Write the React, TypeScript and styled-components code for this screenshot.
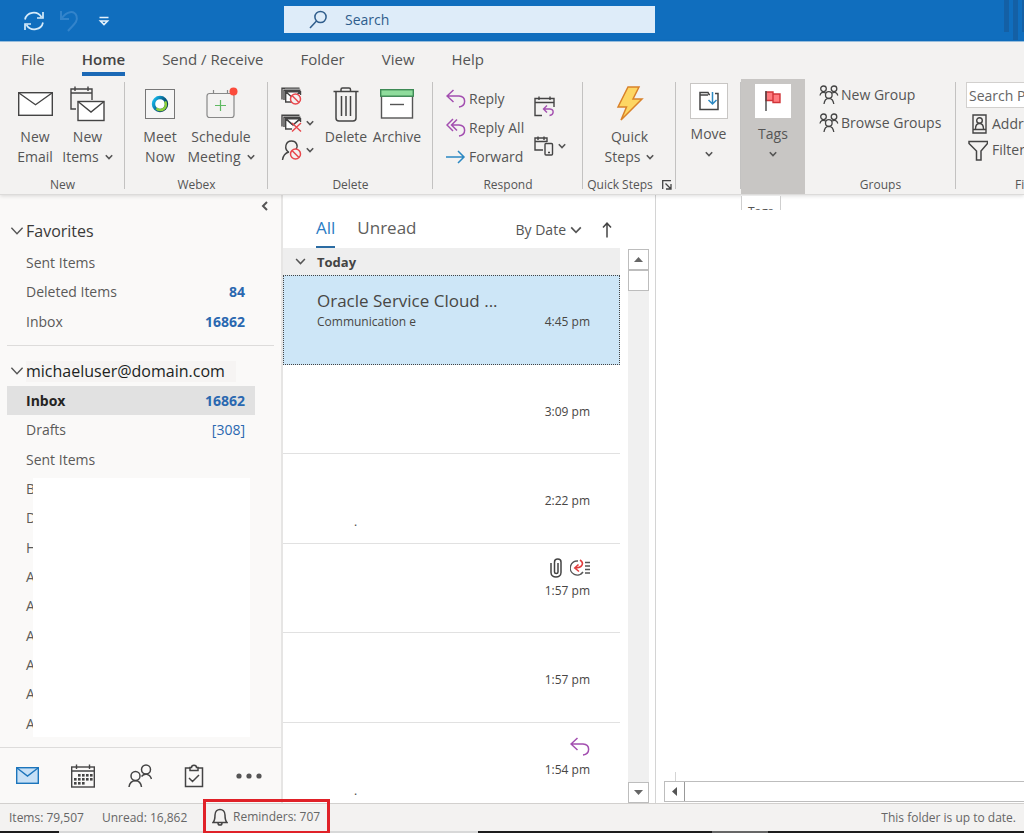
import React from "react";
import styled, { createGlobalStyle, css } from "styled-components";

const Global = createGlobalStyle`
  *, *::before, *::after { box-sizing: border-box; }
  html, body { margin: 0; }
  body, button, input {
    font-family: "Open Sans", "Noto Sans", sans-serif;
    font-size: 14px;
    color: #555;
  }
  button { border: 0; padding: 0; background: none; cursor: pointer; }
  ul { list-style: none; margin: 0; padding: 0; }
  h2 { margin: 0; font-weight: 400; }
  svg { display: block; flex: none; fill: none; }
`;

const Window = styled.div`
  display: flex;
  flex-direction: column;
  height: 100vh;
  overflow: hidden;
  background: #fff;
`;

/* ---------- title bar ---------- */

const TitleBar = styled.header`
  display: flex;
  align-items: flex-start;
  flex: none;
  height: 42px;
  background: #106ebe;
  border-bottom: 1px solid #9cc4e4;
`;

const QuickAccess = styled.div`
  display: flex;
  align-items: center;
  gap: 14px;
  width: 284px;
  height: 41px;
  padding-left: 23px;
`;

const SearchBox = styled.label`
  display: flex;
  align-items: center;
  gap: 17px;
  flex: 0 1 371px;
  height: 27px;
  margin-top: 6px;
  padding-left: 25px;
  background: #deecf9;
  color: #2f5d8c;
`;

const SearchInput = styled.input`
  flex: 1;
  min-width: 0;
  border: 0;
  padding: 0;
  outline: 0;
  background: none;
  &::placeholder { color: #2f5d8c; opacity: 1; }
`;

const Bars = styled.div`
  display: flex;
  gap: 4px;
  width: 20px;
  margin-left: auto;
  overflow: hidden;
`;

const Bar = styled.span<{ $h: number }>`
  flex: 0 0 5px;
  height: ${(p) => p.$h}px;
  background: #1460a5;
`;

/* ---------- ribbon ---------- */

const Ribbon = styled.section`
  flex: none;
  background: #f3f2f1;
  border-bottom: 1px solid #dcdbda;
  box-shadow: 0 1px 4px rgba(0, 0, 0, 0.14);
  position: relative;
  z-index: 2;
`;

const Tabs = styled.nav`
  display: flex;
  align-items: flex-start;
  gap: 37px;
  height: 37px;
  padding: 6px 0 0 21px;
`;

const Tab = styled.button<{ $active?: boolean }>`
  height: 28px;
  padding-bottom: 1px;
  font-size: 15px;
  line-height: 23px;
  border-bottom: 4px solid transparent;
  ${(p) =>
    p.$active &&
    css`
      font-weight: 600;
      color: #444;
      border-color: #1b69b6;
    `}
`;

const Groups = styled.div`
  display: flex;
  height: 115px;
  overflow: hidden;
`;

const Group = styled.section<{ $w: number; $pressed?: boolean; $last?: boolean }>`
  display: flex;
  flex-direction: column;
  flex: 0 0 ${(p) => p.$w}px;
  position: relative;
  background: ${(p) => (p.$pressed ? "#c8c6c4" : "none")};
  &::after {
    content: "";
    display: ${(p) => (p.$pressed || p.$last ? "none" : "block")};
    position: absolute;
    right: 0;
    top: 3px;
    bottom: 5px;
    width: 1px;
    background: #c3c2c1;
  }
`;

const GroupBody = styled.div<{ $pad?: number; $center?: boolean }>`
  display: flex;
  flex: 1;
  padding-left: ${(p) => p.$pad ?? 0}px;
  justify-content: ${(p) => (p.$center ? "center" : "flex-start")};
`;

const GroupLabel = styled.div`
  display: flex;
  align-items: center;
  justify-content: center;
  gap: 9px;
  height: 18px;
  font-size: 12px;
  line-height: 18px;
  white-space: nowrap;
`;

const BigButton = styled.button<{ $w: number }>`
  display: flex;
  flex-direction: column;
  align-items: center;
  width: ${(p) => p.$w}px;
  line-height: 20px;
  white-space: nowrap;
`;

const BigIcon = styled.span<{ $framed?: boolean }>`
  display: flex;
  align-items: center;
  justify-content: center;
  width: 38px;
  height: ${(p) => (p.$framed ? 36 : 38)}px;
  margin: ${(p) => (p.$framed ? "4px 0 5px" : "6px 0 4px")};
  background: ${(p) => (p.$framed ? "#fff" : "none")};
  border: ${(p) => (p.$framed ? "1px solid #c8c6c4" : "0")};
`;

const Line = styled.span`
  display: flex;
  align-items: center;
  gap: 6px;
  height: 20px;
`;

const Stack = styled.div<{ $top: number; $gap: number; $w?: number }>`
  display: flex;
  flex-direction: column;
  align-items: flex-start;
  gap: ${(p) => p.$gap}px;
  padding-top: ${(p) => p.$top}px;
  width: ${(p) => (p.$w ? p.$w + "px" : "auto")};
`;

const SmallButton = styled.button<{ $gap?: number }>`
  display: flex;
  align-items: center;
  gap: ${(p) => p.$gap ?? 4}px;
  height: 20px;
  line-height: 20px;
  white-space: nowrap;
`;

const PeopleInput = styled.input`
  width: 124px;
  height: 26px;
  padding: 0 2px;
  background: #fff;
  border: 1px solid #d2d0ce;
  &::placeholder { color: #666; opacity: 1; }
`;

const Tooltip = styled.div`
  position: absolute;
  left: 741px;
  top: 154px;
  width: 40px;
  height: 14px;
  padding: 9px 6px 0;
  overflow: hidden;
  background: #fff;
  border: solid #cfcfcf;
  border-width: 0 1px;
  font-size: 12px;
  line-height: 14px;
`;

/* ---------- folder pane ---------- */

const Main = styled.main`
  display: flex;
  flex: 1;
  min-height: 0;
`;

const Sidebar = styled.aside`
  display: flex;
  flex-direction: column;
  flex: 0 0 283px;
  background: #faf9f8;
  border-right: 2px solid #e6e5e4;
`;

const Collapse = styled.button`
  align-self: flex-end;
  height: 21px;
  padding: 1px 12px 0 0;
`;

const Folders = styled.div`
  flex: 1;
  min-height: 0;
  overflow: hidden;
`;

const Heading = styled.h2`
  display: flex;
  align-items: center;
  gap: 2px;
  height: 30px;
  padding-left: 10px;
  font-size: 16px;
  color: #3b3a39;
`;

const Account = styled.span`
  padding-right: 11px;
  line-height: 21px;
  color: #201f1e;
  background: #f6f4f3;
`;

const FavoriteList = styled.ul`
  display: grid;
  grid-auto-rows: 1fr;
  height: 88px;
  margin: 2px 26px 9px 7px;
`;

const FolderList = styled.ul`
  display: grid;
  grid-auto-rows: 1fr;
  height: 381px;
  margin: 0 26px 0 7px;
  position: relative;
`;

const Rule = styled.hr`
  margin: 0 7px 10px;
  border: 0;
  border-top: 1px solid #dddcdb;
`;

const Folder = styled.li<{ $active?: boolean }>`
  display: flex;
  align-items: center;
  justify-content: space-between;
  padding: 0 10px 0 19px;
  font-weight: ${(p) => (p.$active ? 700 : 400)};
  color: ${(p) => (p.$active ? "#252423" : "#5b5a59")};
  background: ${(p) => (p.$active ? "#e1e1e1" : "none")};
`;

const Count = styled.span<{ $bold?: boolean }>`
  color: #2a68b0;
  font-weight: ${(p) => (p.$bold ? 700 : 400)};
`;

const Blank = styled.div`
  position: absolute;
  left: 26px;
  top: 92px;
  width: 217px;
  height: 259px;
  background: #fff;
`;

const Modules = styled.nav`
  display: flex;
  align-items: center;
  justify-content: space-between;
  flex: none;
  height: 56px;
  padding: 0 19px 0 16px;
  border-top: 1px solid #dddcdb;
`;

/* ---------- message list ---------- */

const ListPane = styled.section`
  display: flex;
  flex: 0 0 373px;
  padding-top: 10px;
  border-right: 1px solid #d4d4d4;
`;

const ListColumn = styled.div`
  flex: 0 0 337px;
  overflow: hidden;
`;

const ListHeader = styled.div`
  display: flex;
  align-items: flex-start;
  height: 43px;
  padding: 9px 7px 0 33px;
`;

const Filter = styled.button<{ $active?: boolean }>`
  height: 34px;
  margin-right: 22px;
  padding-bottom: 5px;
  font-size: 17px;
  line-height: 24px;
  color: ${(p) => (p.$active ? "#2b7cc4" : "#605e5c")};
  border-bottom: 2px solid ${(p) => (p.$active ? "#2b6ca3" : "transparent")};
`;

const Sort = styled.div`
  display: flex;
  align-items: center;
  gap: 19px;
  height: 31px;
  margin-left: auto;
`;

const DayHeader = styled.div`
  display: flex;
  align-items: center;
  gap: 11px;
  height: 27px;
  padding-left: 12px;
  background: #eee;
  color: #444;
  font-size: 13px;
  font-weight: 700;
`;

const Messages = styled.ul`
  display: grid;
  grid-auto-rows: 1fr;
  height: 537px;
`;

const Message = styled.li<{ $selected?: boolean }>`
  display: grid;
  grid-template-columns: 1fr auto;
  grid-template-rows: 24px 18px;
  align-content: start;
  padding: 14px 30px 0 34px;
  border-bottom: 1px solid #e1e1e1;
  color: #484644;
  ${(p) =>
    p.$selected &&
    css`
      padding: 13px 29px 0 33px;
      background: #cde6f7;
      border: 1px dotted #444;
    `}
`;

const Subject = styled.span`
  grid-column: 1;
  font-size: 17px;
  line-height: 24px;
  white-space: nowrap;
`;

const Flags = styled.span`
  grid-column: 2;
  grid-row: 1;
  display: flex;
  align-items: center;
  justify-content: flex-end;
  gap: 8px;
  height: 20px;
`;

const Preview = styled.span`
  grid-column: 1;
  grid-row: 2;
  font-size: 12px;
  line-height: 18px;
`;

const Time = styled.time`
  grid-column: 2;
  grid-row: 2;
  font-size: 12px;
  line-height: 18px;
`;

const Dot = styled.span`
  grid-column: 1;
  grid-row: 3;
  padding: 4px 0 0 37px;
  font-size: 12px;
  line-height: 16px;
`;

const Scroll = styled.div`
  display: flex;
  flex-direction: column;
  width: 21px;
  margin: 44px 0 0 8px;
  background: #f0f0f0;
`;

const ScrollButton = styled.button`
  display: flex;
  align-items: center;
  justify-content: center;
  flex: 0 0 21px;
  height: 21px;
  background: #fff;
  border: 1px solid #bdbdbd;
`;

const ScrollSpace = styled.div`
  flex: 1;
`;

/* ---------- reading pane ---------- */

const Reading = styled.section`
  display: flex;
  flex-direction: column;
  justify-content: flex-end;
  flex: 1;
  min-width: 0;
  padding: 0 0 1px 8px;
`;

const Tick = styled.span`
  width: 1px;
  height: 9px;
  margin-left: 11px;
  background: #d4d4d4;
`;

const HScroll = styled.div`
  display: flex;
  height: 21px;
  border: 1px solid #bdbdbd;
  border-right: 0;
`;

const HButton = styled.button`
  display: flex;
  align-items: center;
  justify-content: center;
  width: 20px;
  border-right: 1px solid #999;
`;

/* ---------- status bar ---------- */

const Status = styled.footer`
  display: flex;
  align-items: center;
  flex: none;
  height: 28px;
  padding: 0 8px 0 9px;
  background: #f3f2f1;
  border-top: 1px solid #d2d0ce;
  font-size: 12px;
  color: #666;
  position: relative;
  z-index: 3;
`;

const StatusText = styled.span<{ $push?: boolean }>`
  margin-right: ${(p) => (p.$push ? 0 : 18)}px;
  margin-left: ${(p) => (p.$push ? "auto" : 0)};
`;

const Reminders = styled.button`
  position: absolute;
  left: 203px;
  top: -5px;
  display: flex;
  align-items: center;
  gap: 5px;
  width: 127px;
  height: 35px;
  padding-left: 6px;
  border: 3px solid #e02128;
  font-size: 12px;
  color: #666;
`;

const Taskbar = styled.div`
  display: flex;
  flex: none;
  height: 2px;
  background: #1c1c1c;
`;

const TaskSlot = styled.span<{ $from: number; $w: number; $c: string }>`
  margin-left: ${(p) => p.$from}px;
  width: ${(p) => p.$w}px;
  background: ${(p) => p.$c};
`;

/* ---------- icons ---------- */

const Chevron = ({ w = 8, c = "#555", s = 1.6 }: { w?: number; c?: string; s?: number }) => (
  <svg width={w} height={w} viewBox="0 0 8 8" stroke={c} strokeWidth={(s * 8) / w}>
    <path d="M0.8 2.2 L4 5.5 L7.2 2.2" />
  </svg>
);

const Envelope = ({ w, h, c = "#444", f = "#fff" }: { w: number; h: number; c?: string; f?: string }) => (
  <svg width={w} height={h} viewBox={`0 0 ${w} ${h}`} stroke={c} strokeWidth="1.4">
    <rect x="0.7" y="0.7" width={w - 1.4} height={h - 1.4} fill={f} />
    <path d={`M1 1 L${w / 2} ${h * 0.53} L${w - 1} 1`} />
  </svg>
);

const Prohibit = ({ x, y }: { x: number; y: number }) => (
  <g stroke="#e8474c" strokeWidth="1.5">
    <circle cx={x} cy={y} r="5" fill="#f3f2f1" />
    <path d={`M${x - 3.5} ${y - 3.5} l7 7`} />
  </g>
);

const JunkStack = ({ kind }: { kind: "block" | "remove" }) => (
  <svg width="21" height="19" viewBox="0 0 21 19" stroke="#444" strokeWidth="1.4">
    <path d="M1 12.5 V1.2 H18.5 M3 13 V3.2 H19.5" />
    {kind === "block" && <path d="M4 2.2 H19" stroke="#999" />}
    <rect x="4.7" y="4.7" width="15" height="11" fill="#fff" stroke="none" />
    <path d="M11 15 H4.7 V4.7 H19.5 V8 M5 5 L12 11 L19 5" />
    {kind === "block" ? (
      <Prohibit x={14.5} y={12} />
    ) : (
      <>
        <path d="M11 8.5 h9 v9 h-9z" fill="#f3f2f1" stroke="none" />
        <path d="M5 5 L12 11 L19 5" />
        <path d="M11 9 L20 17.5 M20 9 L11 17.5" stroke="#e8474c" />
      </>
    )}
  </svg>
);

const ReplyIcon = ({ all }: { all?: boolean }) => (
  <svg width="20" height="20" viewBox="0 0 20 20" stroke="#a34fb0" strokeWidth="1.5">
    {all ? (
      <path d="M7 1 L1 7 L7 13 M11 1.5 L5.5 7 L11 12.5 M5.5 7 H13 C20.5 7.5 20.5 17 13 18" />
    ) : (
      <path d="M7.5 1 L1 7 L7.5 13 M1 7 H13 C20.5 7.5 20.5 17 13 18" />
    )}
  </svg>
);

const PeopleGroup = () => (
  <svg width="20" height="20" viewBox="0 0 20 20" stroke="#444" strokeWidth="1.3">
    <circle cx="4.5" cy="3.8" r="2.8" />
    <circle cx="15" cy="3.8" r="2.8" />
    <circle cx="9.8" cy="10" r="3.3" />
    <path d="M1 10.5 C1.5 7.5 3.5 6.8 6.8 8 M18.8 10.5 C18 7.5 16 6.8 12.8 8 M5 19 C5.5 15 7 13.5 9.8 13.4 C12.8 13.5 14.2 15 14.8 19" />
  </svg>
);

const calendarDots = [
  [7, 10], [11, 10], [15, 10], [19, 10],
  [3, 14], [7, 14], [11, 14], [15, 14], [19, 14],
  [3, 18], [7, 18], [11, 18],
];

const CalGlyph = () => (
  <svg width="24" height="24" viewBox="0 0 24 24" stroke="#444" strokeWidth="1.4">
    <rect x="0.7" y="3" width="22.6" height="20" />
    <path d="M1 7 H23 M5.5 0.5 V5 M18.5 0.5 V5" />
    <g fill="#444" stroke="none">
      {calendarDots.map(([x, y]) => (
        <rect key={`${x}-${y}`} x={x} y={y} width="2.6" height="2.6" />
      ))}
    </g>
  </svg>
);

const folders = ["B", "D", "H", "A", "A", "A", "A", "A", "A"];

export default function App() {
  return (
    <Window>
      <Global />
      <TitleBar>
        <QuickAccess>
          <button aria-label="Send and receive all folders">
            <svg width="22" height="22" viewBox="0 0 22 22" stroke="#d6ebfa" strokeWidth="1.7">
              <path d="M2 9.5 C3.5 2 14 0 18.5 7 M20 2 V8 H14 M20 12.5 C18.5 20 8 22 3.5 15 M2 20 V14 H8" />
            </svg>
          </button>
          <button aria-label="Undo">
            <svg width="20" height="22" viewBox="0 0 20 22" stroke="#3384cb" strokeWidth="2">
              <path d="M2 1 V9 H10 M2.5 8.5 C8 1 15 0 17.5 6 C19.5 12 14 15 9 21" />
            </svg>
          </button>
          <button aria-label="Customize toolbar">
            <svg width="22" height="12" viewBox="0 0 22 12" stroke="#e6f2fb" strokeWidth="1.6">
              <path d="M6.5 2.5 H15.5 M7.5 6 H14.5 L11 9.5 Z" />
            </svg>
          </button>
        </QuickAccess>
        <SearchBox>
          <svg width="19" height="19" viewBox="0 0 19 19" stroke="#2f5d8c" strokeWidth="1.5">
            <circle cx="11.5" cy="7" r="5.6" />
            <path d="M7.5 11 L1 18" />
          </svg>
          <SearchInput placeholder="Search" aria-label="Search" />
        </SearchBox>
        <Bars>
          <Bar $h={32} />
          <Bar $h={40} />
          <Bar $h={32} />
        </Bars>
      </TitleBar>

      <Ribbon>
        <Tabs>
          <Tab>File</Tab>
          <Tab $active>Home</Tab>
          <Tab>Send / Receive</Tab>
          <Tab>Folder</Tab>
          <Tab>View</Tab>
          <Tab>Help</Tab>
        </Tabs>
        <Groups>
          <Group $w={125}>
            <GroupBody $pad={9}>
              <BigButton $w={52}>
                <BigIcon><Envelope w={35} h={24} /></BigIcon>
                <Line>New</Line>
                <Line>Email</Line>
              </BigButton>
              <BigButton $w={53}>
                <BigIcon>
                  <svg width="35" height="36" viewBox="0 0 35 36" stroke="#444" strokeWidth="1.4">
                    <path d="M6 23 H1 V3 H22 V14 M1 7 H22 M5 0.5 V5 M18 0.5 V5" />
                    <rect x="8" y="15.5" width="26" height="19" fill="#fff" />
                    <path d="M8 15.5 L21 26 L34 15.5" />
                  </svg>
                </BigIcon>
                <Line>New</Line>
                <Line>Items <Chevron /></Line>
              </BigButton>
            </GroupBody>
            <GroupLabel>New</GroupLabel>
          </Group>

          <Group $w={143}>
            <GroupBody $pad={9}>
              <BigButton $w={52}>
                <BigIcon>
                  <svg width="30" height="30" viewBox="0 0 30 30" strokeWidth="1">
                    <defs>
                      <linearGradient id="ring" x1="0" y1="0.2" x2="1" y2="0.8">
                        <stop offset="0" stopColor="#16b5e8" />
                        <stop offset="0.45" stopColor="#0a6f9c" />
                        <stop offset="1" stopColor="#07304d" />
                      </linearGradient>
                    </defs>
                    <rect x="0.5" y="0.5" width="29" height="29" stroke="#777" fill="#f6f6f6" />
                    <circle cx="15" cy="15" r="6.5" stroke="url(#ring)" strokeWidth="3.4" fill="#fff" />
                    <path d="M20 12.5 A5.5 5.5 0 0 1 11.5 19.4" stroke="#8bd03c" strokeWidth="2.6" />
                  </svg>
                </BigIcon>
                <Line>Meet</Line>
                <Line>Now</Line>
              </BigButton>
              <BigButton $w={70}>
                <BigIcon>
                  <svg width="34" height="34" viewBox="0 0 34 34" stroke="#888" strokeWidth="1.2">
                    <rect x="3" y="6.5" width="27" height="24" rx="2.5" />
                    <path d="M9.5 3 V6 M23.5 3 V6" />
                    <path d="M16.5 13 V24 M11 18.5 H22" stroke="#5fba62" />
                    <circle cx="29.5" cy="4.5" r="4" fill="#fb4b3b" stroke="none" />
                  </svg>
                </BigIcon>
                <Line>Schedule</Line>
                <Line>Meeting <Chevron /></Line>
              </BigButton>
            </GroupBody>
            <GroupLabel>Webex</GroupLabel>
          </Group>

          <Group $w={165}>
            <GroupBody $pad={13}>
              <Stack $top={7} $gap={7} $w={40}>
                <SmallButton aria-label="Ignore"><JunkStack kind="block" /></SmallButton>
                <SmallButton aria-label="Clean up"><JunkStack kind="remove" /><Chevron /></SmallButton>
                <SmallButton aria-label="Junk">
                  <svg width="21" height="21" viewBox="0 0 21 21" stroke="#444" strokeWidth="1.4">
                    <path d="M8 12.5 C2.500 9 4.500 1 10.500 1 C15.500 1 17.500 6 15 9 M8 12 C4 13 2 16 1.500 20" />
                    <Prohibit x={14.5} y={14} />
                  </svg>
                  <Chevron />
                </SmallButton>
              </Stack>
              <BigButton $w={50}>
                <BigIcon>
                  <svg width="26" height="35" viewBox="0 0 26 35" stroke="#444" strokeWidth="1.5">
                    <path d="M0.5 4.5 H25.5 M8 4.5 V2.5 Q8 1 9.5 1 H16 Q17.5 1 17.5 2.5 V4.5 M3 5 V31 Q3 34 6 34 H20 Q23 34 23 31 V5 M8.5 9 V29 M13 9 V29 M17.5 9 V29" />
                  </svg>
                </BigIcon>
                <Line>Delete</Line>
              </BigButton>
              <BigButton $w={52}>
                <BigIcon>
                  <svg width="34" height="30" viewBox="0 0 34 30" strokeWidth="1.4">
                    <rect x="1.5" y="7" width="31" height="22" stroke="#555" fill="#fff" />
                    <rect x="0.7" y="0.7" width="32.6" height="6.5" stroke="#3d8a55" fill="#8fdc9c" />
                    <path d="M10 15.5 H24" stroke="#555" />
                  </svg>
                </BigIcon>
                <Line>Archive</Line>
              </BigButton>
            </GroupBody>
            <GroupLabel>Delete</GroupLabel>
          </Group>

          <Group $w={150}>
            <GroupBody $pad={13}>
              <Stack $top={10} $gap={9} $w={88}>
                <SmallButton $gap={3}><ReplyIcon />Reply</SmallButton>
                <SmallButton $gap={3}><ReplyIcon all />Reply All</SmallButton>
                <SmallButton $gap={3}>
                  <svg width="20" height="16" viewBox="0 0 20 16" stroke="#2b88c2" strokeWidth="1.5">
                    <path d="M0 8 H18 M12 2 L18 8 L12 14" />
                  </svg>
                  Forward
                </SmallButton>
              </Stack>
              <Stack $top={17} $gap={20}>
                <SmallButton aria-label="Reply with meeting">
                  <svg width="21" height="21" viewBox="0 0 21 21" stroke="#444" strokeWidth="1.4">
                    <path d="M8 19.5 H1 V2.5 H20 V11 M1 6.5 H20 M5 0.5 V4 M16 0.5 V4" />
                    <path d="M13 9.5 L9.5 13 L13 16.5 M10 13 H16 C20.5 13.5 20 19 15.5 19.5" stroke="#a34fb0" />
                  </svg>
                </SmallButton>
                <SmallButton aria-label="More respond actions">
                  <svg width="20" height="20" viewBox="0 0 20 20" stroke="#444" strokeWidth="1.4">
                    <path d="M9 14 H1 V2 H13 V6 M1 5.5 H13 M4 0.5 V4 M10 0.5 V4" />
                    <rect x="11" y="7.5" width="7.5" height="11.5" rx="1" />
                    <path d="M14 16.5 H16" />
                  </svg>
                  <Chevron />
                </SmallButton>
              </Stack>
            </GroupBody>
            <GroupLabel>Respond</GroupLabel>
          </Group>

          <Group $w={93}>
            <GroupBody $center>
              <BigButton $w={60}>
                <BigIcon>
                  <svg width="28" height="36" viewBox="0 0 28 36" stroke="#d9822b" strokeWidth="1.5">
                    <path d="M12 1 H23 L17 13 H26 L5 34 L10.5 21 H2 Z" fill="#fdd663" />
                  </svg>
                </BigIcon>
                <Line>Quick</Line>
                <Line>Steps <Chevron /></Line>
              </BigButton>
            </GroupBody>
            <GroupLabel>
              Quick Steps
              <svg width="10" height="10" viewBox="0 0 10 10" stroke="#444" strokeWidth="1.3">
                <path d="M0.7 9 V0.7 H9 M3.5 3.5 L9 9 M9 4 V9 H4" />
              </svg>
            </GroupLabel>
          </Group>

          <Group $w={65}>
            <GroupBody $center>
              <BigButton $w={60}>
                <BigIcon $framed>
                  <svg width="20" height="20" viewBox="0 0 20 20" stroke="#444" strokeWidth="1.5">
                    <path d="M11 3.5 H10 L9 1.5 H1 V18.5 H19 V2.5 H16 M1 4 H9" />
                    <path d="M13.5 1 V13 M9.5 9 L13.5 13 L17.5 9" stroke="#2b88c2" />
                  </svg>
                </BigIcon>
                <Line>Move</Line>
                <Line><Chevron /></Line>
              </BigButton>
            </GroupBody>
          </Group>

          <Group $w={64} $pressed>
            <GroupBody $center>
              <BigButton $w={60}>
                <BigIcon $framed>
                  <svg width="18" height="22" viewBox="0 0 18 22" stroke="#d13438" strokeWidth="1.4">
                    <path d="M2 2 H9 V4 H16 V12.5 H9 V10.5 H2 Z M9 4 V10.5" fill="#ff7b7f" />
                    <path d="M2 1 V21" stroke="#444" />
                  </svg>
                </BigIcon>
                <Line>Tags</Line>
                <Line><Chevron /></Line>
              </BigButton>
            </GroupBody>
          </Group>

          <Group $w={151}>
            <GroupBody $pad={14}>
              <Stack $top={6} $gap={8}>
                <SmallButton $gap={2}><PeopleGroup />New Group</SmallButton>
                <SmallButton $gap={2}><PeopleGroup />Browse Groups</SmallButton>
              </Stack>
            </GroupBody>
            <GroupLabel>Groups</GroupLabel>
          </Group>

          <Group $w={142} $last>
            <GroupBody $pad={10}>
              <Stack $top={3} $gap={6}>
                <PeopleInput placeholder="Search People" aria-label="Search People" />
                <SmallButton>
                  <svg width="22" height="20" viewBox="0 0 22 20" stroke="#444" strokeWidth="1.4">
                    <path d="M7 1 H20 V19 H7 Z M7 15.500 H20" />
                    <circle cx="13.5" cy="6.5" r="2.8" />
                    <path d="M9.5 15 C9.5 11 11 9.500 13.5 9.500 C16 9.500 17.5 11 17.5 15" />
                  </svg>
                  Address Book
                </SmallButton>
                <SmallButton>
                  <svg width="22" height="21" viewBox="0 0 22 21" stroke="#444" strokeWidth="1.5">
                    <path d="M3 1.500 H21.500 V3.500 L15 11 V20 H10.500 V11 L3 3.500 Z" />
                  </svg>
                  Filter Email
                </SmallButton>
              </Stack>
            </GroupBody>
            <GroupLabel>Find</GroupLabel>
          </Group>
        </Groups>
        <Tooltip>Tags</Tooltip>
      </Ribbon>

      <Main>
        <Sidebar>
          <Collapse aria-label="Collapse folder pane">
            <svg width="8" height="10" viewBox="0 0 8 10" stroke="#555" strokeWidth="2">
              <path d="M6 1 L2 5 L6 9" />
            </svg>
          </Collapse>
          <Folders>
            <Heading><Chevron w={14} s={1.4} />Favorites</Heading>
            <FavoriteList>
              <Folder>Sent Items</Folder>
              <Folder>Deleted Items<Count $bold>84</Count></Folder>
              <Folder>Inbox<Count $bold>16862</Count></Folder>
            </FavoriteList>
            <Rule />
            <Heading><Chevron w={14} s={1.4} /><Account>michaeluser@domain.com</Account></Heading>
            <FolderList>
              <Folder $active>Inbox<Count $bold>16862</Count></Folder>
              <Folder>Drafts<Count>[308]</Count></Folder>
              <Folder>Sent Items</Folder>
              {folders.map((f, i) => (
                <Folder key={i}>{f}</Folder>
              ))}
              <Folder>Alison Matt f<Count $bold>3745</Count></Folder>
              <Blank />
            </FolderList>
          </Folders>
          <Modules>
            <button aria-label="Mail"><Envelope w={23} h={17} c="#1c75bc" f="#c7e0f6" /></button>
            <button aria-label="Calendar"><CalGlyph /></button>
            <button aria-label="People">
              <svg width="24" height="24" viewBox="0 0 24 24" stroke="#444" strokeWidth="1.5">
                <circle cx="7.5" cy="12" r="4.500" />
                <circle cx="18" cy="5.5" r="4.500" />
                <path d="M1 23 C1.5 19 4 16.7 7.5 16.7 C11 16.7 13 19 13.5 23 M13.5 12.5 C16 9.5 21.5 9 23.5 15" />
              </svg>
            </button>
            <button aria-label="Tasks">
              <svg width="20" height="24" viewBox="0 0 20 24" stroke="#444" strokeWidth="1.5">
                <path d="M6 4 H1.5 V22.5 H18.5 V4 H14 M6 6.5 V3.5 H7.5 C7.5 0.5 12.5 0.5 12.5 3.5 H14 V6.5 Z M5 14 L8.5 17.5 L15 11" />
              </svg>
            </button>
            <button aria-label="More">
              <svg width="26" height="6" viewBox="0 0 26 6">
                <g fill="#555"><circle cx="3" cy="3" r="2.6" /><circle cx="13" cy="3" r="2.6" /><circle cx="23" cy="3" r="2.6" /></g>
              </svg>
            </button>
          </Modules>
        </Sidebar>

        <ListPane>
          <ListColumn>
            <ListHeader>
              <Filter $active>All</Filter>
              <Filter>Unread</Filter>
              <Sort>
                <SmallButton>By Date <Chevron w={12} s={1.7} /></SmallButton>
                <button aria-label="Sort ascending">
                  <svg width="12" height="16" viewBox="0 0 12 16" stroke="#444" strokeWidth="1.5">
                    <path d="M6 15.5 V1 M2 5.5 L6 1.2 L10 5.5" />
                  </svg>
                </button>
              </Sort>
            </ListHeader>
            <DayHeader><Chevron w={11} s={1.5} />Today</DayHeader>
            <Messages>
              <Message $selected>
                <Subject>Oracle Service Cloud ...</Subject>
                <Preview>Communication e</Preview>
                <Time>4:45 pm</Time>
              </Message>
              <Message><Time>3:09 pm</Time></Message>
              <Message><Time>2:22 pm</Time><Dot>.</Dot></Message>
              <Message>
                <Flags>
                  <svg width="12" height="20" viewBox="0 0 12 20" stroke="#444" strokeWidth="1.5">
                    <path d="M8 5 V14 C8 16 4.5 16 4.5 14 V4 C4.5 0 11 0 11 4 V14.5 C11 20.5 1 20.5 1 14.5 V5" />
                  </svg>
                  <svg width="20" height="18" viewBox="0 0 20 18" stroke="#555" strokeWidth="1.4">
                    <path d="M8 2 A7 7 0 1 0 13 13 M15 3.5 H20 M15 7 H20 M15 10.5 H20 M15 14 H20" />
                    <path d="M10 1 C14.5 4 12.5 9 5 9 M8.5 5.5 L4.8 9 L9 12.5" stroke="#e03c3c" strokeWidth="1.6" />
                  </svg>
                </Flags>
                <Time>1:57 pm</Time>
              </Message>
              <Message><Time>1:57 pm</Time></Message>
              <Message>
                <Flags><ReplyIcon /></Flags>
                <Time>1:54 pm</Time>
                <Dot>.</Dot>
              </Message>
            </Messages>
          </ListColumn>
          <Scroll>
            <ScrollButton aria-label="Scroll up">
              <svg width="9" height="5" viewBox="0 0 9 5"><path d="M0 5 L4.5 0 L9 5 Z" fill="#666" /></svg>
            </ScrollButton>
            <ScrollButton aria-label="Scroll position" />
            <ScrollSpace />
            <ScrollButton aria-label="Scroll down">
              <svg width="9" height="5" viewBox="0 0 9 5"><path d="M0 0 L4.5 5 L9 0 Z" fill="#666" /></svg>
            </ScrollButton>
          </Scroll>
        </ListPane>

        <Reading>
          <Tick />
          <HScroll>
            <HButton aria-label="Scroll left">
              <svg width="5" height="9" viewBox="0 0 5 9"><path d="M5 0 L0 4.5 L5 9 Z" fill="#555" /></svg>
            </HButton>
          </HScroll>
        </Reading>
      </Main>

      <Status>
        <StatusText>Items: 79,507</StatusText>
        <StatusText>Unread: 16,862</StatusText>
        <Reminders>
          <svg width="16" height="18" viewBox="0 0 16 18" stroke="#444" strokeWidth="1.5">
            <path d="M1 14.5 C3 12.5 3 10 3 7 C3 -0.5 13 -0.5 13 7 C13 10 13 12.5 15 14.5 Z M6 15 C6 17.8 10 17.8 10 15" />
          </svg>
          Reminders: 707
        </Reminders>
        <StatusText $push>This folder is up to date.</StatusText>
      </Status>
      <Taskbar>
        <TaskSlot $from={59} $w={419} $c="#d8d8d8" />
        <TaskSlot $from={234} $w={56} $c="#666" />
      </Taskbar>
    </Window>
  );
}
